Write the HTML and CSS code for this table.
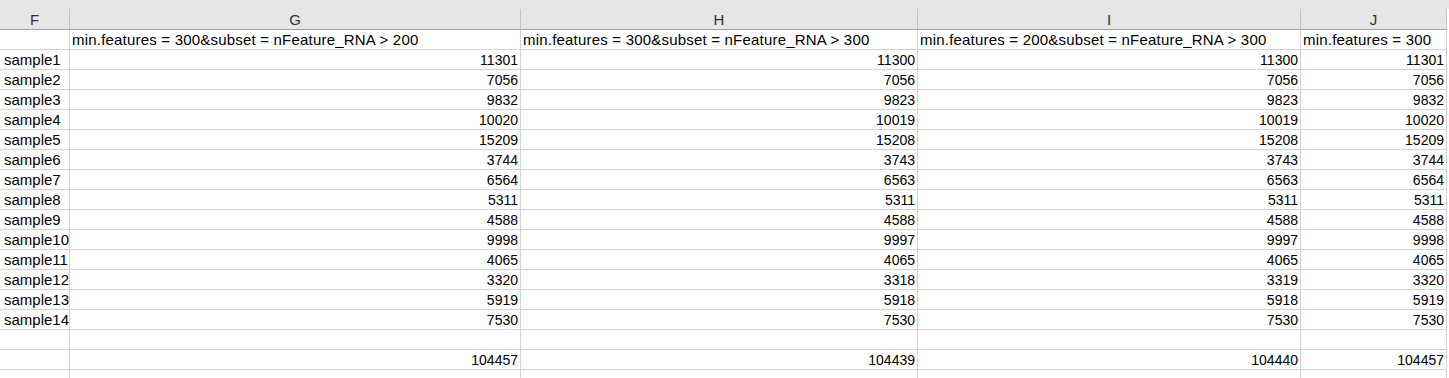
FILE: index.html
```html
<!DOCTYPE html>
<html>
<head>
<meta charset="utf-8">
<link rel="stylesheet" href="styles.css">
</head>
<body>
<div class="sheet">
  <div class="topband"></div>
  <div class="grid">
    <div class="ch">F</div><div class="ch">G</div><div class="ch">H</div><div class="ch">I</div><div class="ch">J</div>

    <div class="c"></div><div class="c l">min.features = 300&amp;subset = nFeature_RNA &gt; 200</div><div class="c l">min.features = 300&amp;subset = nFeature_RNA &gt; 300</div><div class="c l">min.features = 200&amp;subset = nFeature_RNA &gt; 300</div><div class="c l">min.features = 300</div>

    <div class="c l s">sample1</div><div class="c">11301</div><div class="c">11300</div><div class="c">11300</div><div class="c">11301</div>
    <div class="c l s">sample2</div><div class="c">7056</div><div class="c">7056</div><div class="c">7056</div><div class="c">7056</div>
    <div class="c l s">sample3</div><div class="c">9832</div><div class="c">9823</div><div class="c">9823</div><div class="c">9832</div>
    <div class="c l s">sample4</div><div class="c">10020</div><div class="c">10019</div><div class="c">10019</div><div class="c">10020</div>
    <div class="c l s">sample5</div><div class="c">15209</div><div class="c">15208</div><div class="c">15208</div><div class="c">15209</div>
    <div class="c l s">sample6</div><div class="c">3744</div><div class="c">3743</div><div class="c">3743</div><div class="c">3744</div>
    <div class="c l s">sample7</div><div class="c">6564</div><div class="c">6563</div><div class="c">6563</div><div class="c">6564</div>
    <div class="c l s">sample8</div><div class="c">5311</div><div class="c">5311</div><div class="c">5311</div><div class="c">5311</div>
    <div class="c l s">sample9</div><div class="c">4588</div><div class="c">4588</div><div class="c">4588</div><div class="c">4588</div>
    <div class="c l s">sample10</div><div class="c">9998</div><div class="c">9997</div><div class="c">9997</div><div class="c">9998</div>
    <div class="c l s">sample11</div><div class="c">4065</div><div class="c">4065</div><div class="c">4065</div><div class="c">4065</div>
    <div class="c l s">sample12</div><div class="c">3320</div><div class="c">3318</div><div class="c">3319</div><div class="c">3320</div>
    <div class="c l s">sample13</div><div class="c">5919</div><div class="c">5918</div><div class="c">5918</div><div class="c">5919</div>
    <div class="c l s">sample14</div><div class="c">7530</div><div class="c">7530</div><div class="c">7530</div><div class="c">7530</div>

    <div class="c"></div><div class="c"></div><div class="c"></div><div class="c"></div><div class="c"></div>
    <div class="c"></div><div class="c">104457</div><div class="c">104439</div><div class="c">104440</div><div class="c">104457</div>
    <div class="c"></div><div class="c"></div><div class="c"></div><div class="c"></div><div class="c"></div>
  </div>
</div>
</body>
</html>
```

FILE: styles.css
```css
html, body {
  margin: 0;
  padding: 0;
  background: #ffffff;
}
.sheet {
  width: 1449px;
  height: 378px;
  overflow: hidden;
  font-family: "Liberation Sans", Arial, sans-serif;
  font-size: 14px;
  color: #000;
}
.topband {
  height: 9px;
  background: #e6e6e6;
}
.grid {
  display: grid;
  grid-template-columns: 70px 451px 397px 383px 146px;
  grid-template-rows: 21px;
  grid-auto-rows: 20px;
}
.ch {
  background: #e6e6e6;
  border-right: 1px solid #c4c4c4;
  border-bottom: 1px solid #a0a0a0;
  box-sizing: border-box;
  text-align: center;
  line-height: 20px;
  color: #333;
  padding-top: 1px;
  font-size: 15px;
}
.c {
  border-right: 1px solid #d4d4d4;
  border-bottom: 1px solid #d4d4d4;
  box-sizing: border-box;
  text-align: right;
  padding: 1px 2px 0 2px;
  line-height: 18px;
  white-space: nowrap;
  overflow: hidden;
}
.c.l {
  text-align: left;
  font-size: 15px;
  letter-spacing: 0.2px;
}
.c.s {
  padding-left: 4px;
  letter-spacing: 0;
}
```
